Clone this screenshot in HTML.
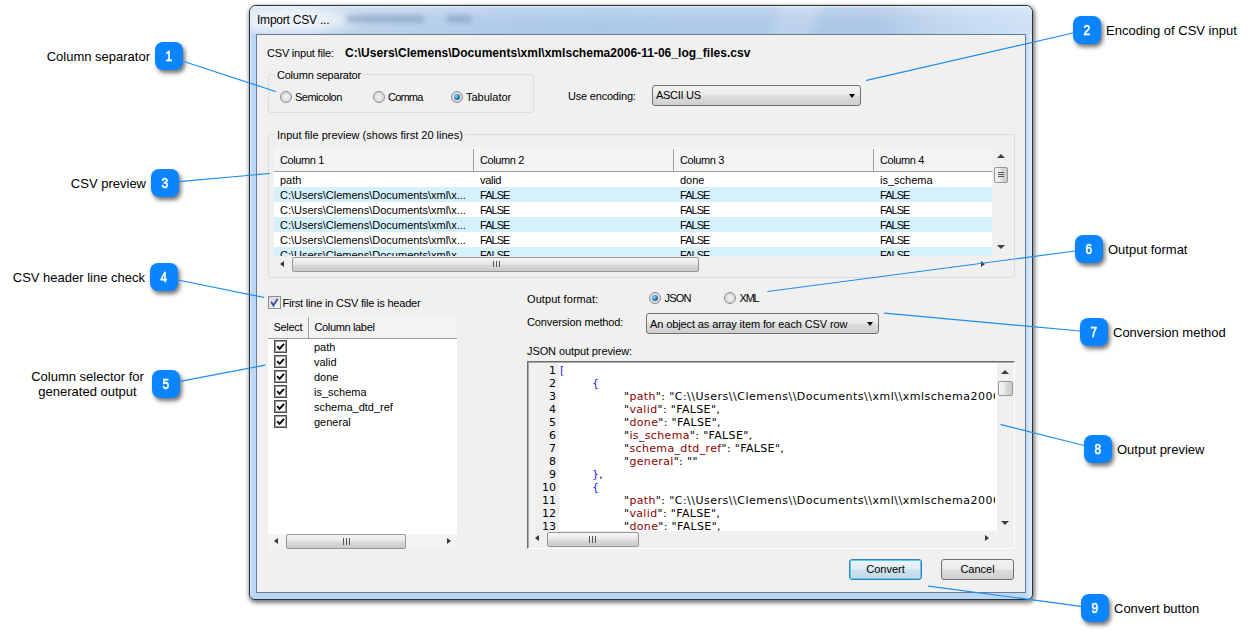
<!DOCTYPE html>
<html>
<head>
<meta charset="utf-8">
<title>Import CSV</title>
<style>
html,body{margin:0;padding:0;background:#fff;}
body{width:1253px;height:633px;position:relative;overflow:hidden;font-family:"Liberation Sans",sans-serif;font-size:11px;color:#000;}
.abs{position:absolute;}
.t{position:absolute;white-space:nowrap;line-height:14px;font-size:11px;}
/* annotation labels */
.lab{position:absolute;white-space:nowrap;font-size:13px;line-height:15px;color:#000;}
.badge{position:absolute;width:28px;height:28px;border-radius:8px;background:#0a84ff;color:#fff;font-size:14px;line-height:28px;text-align:center;box-shadow:2px 3px 4px rgba(0,0,0,.55);}
.badge span{display:inline-block;transform:scaleX(.85);-webkit-text-stroke:.6px #fff;}
/* window */
#win{left:249px;top:5px;width:784px;height:595px;border-radius:7px 7px 6px 6px;background:#b9d8f9;border:1px solid #2b2f36;box-sizing:border-box;box-shadow:1px 2px 4px 1px rgba(0,0,0,.52);overflow:hidden;}
#tbar{left:0;top:0;width:782px;height:28px;background:radial-gradient(ellipse 75px 16px at 46px 14px,rgba(255,255,255,.8) 0,rgba(255,255,255,.55) 50%,rgba(255,255,255,0) 100%),linear-gradient(to bottom,rgba(255,255,255,.75) 0,rgba(255,255,255,.25) 2px,rgba(255,255,255,.08) 12px,rgba(255,255,255,0) 100%),linear-gradient(112deg,rgba(255,255,255,0) 0,rgba(255,255,255,0) 66%,rgba(255,255,255,.18) 68%,rgba(255,255,255,.18) 71%,rgba(255,255,255,0) 73%,rgba(255,255,255,0) 100%),linear-gradient(to right,#cfdff1 0,#bcd2ea 14%,#aecaea 30%,#a8c7e8 45%,#acc9e9 60%,#a9c5e5 80%,#bdd4ee 87%,#c6dbf3 93%,#cde0f5 100%);}
.blob{position:absolute;background:#7f99ba;filter:blur(2.5px);opacity:.55;border-radius:3px;}
#client{left:256px;top:34px;width:770px;height:559px;background:#f0f0f0;border:1px solid #6d7a8a;box-sizing:border-box;}
.gb{position:absolute;border:1px solid #d5dfe5;border-radius:3px;box-sizing:border-box;}
.gbl{position:absolute;background:#f0f0f0;padding:0 2px;white-space:nowrap;line-height:14px;}
.radio{position:absolute;width:12px;height:12px;border-radius:50%;box-sizing:border-box;border:1px solid #8e8f8f;background:radial-gradient(circle at 50% 50%,#f4f4f4 0,#dcdcdc 60%,#c4c4c4 100%);}
.radio.on::after{content:"";position:absolute;left:2px;top:2px;width:6px;height:6px;border-radius:50%;background:radial-gradient(circle at 35% 35%,#8fd6f5 0,#1c6fb6 60%,#0c3e7a 100%);}
.combo{position:absolute;box-sizing:border-box;border:1px solid #707070;border-radius:3px;background:linear-gradient(to bottom,#f2f2f2 0,#ebebeb 48%,#dddddd 52%,#cfcfcf 100%);}
.combo .t{left:3px;}
.arrow{position:absolute;width:0;height:0;border-left:3.5px solid transparent;border-right:3.5px solid transparent;border-top:4px solid #000;}
.btn{position:absolute;box-sizing:border-box;border:1px solid #707070;border-radius:3px;background:linear-gradient(to bottom,#f2f2f2 0,#ebebeb 48%,#dddddd 52%,#cfcfcf 100%);text-align:center;line-height:19px;font-size:11px;}
.sb{position:absolute;background:#f0f0f0;}
.thumbh{position:absolute;box-sizing:border-box;border:1px solid #979797;border-radius:2px;background:linear-gradient(to bottom,#f5f5f5 0,#e9e9ea 42%,#d8d9db 58%,#c9cacc 100%);}
.thumbv{position:absolute;box-sizing:border-box;border:1px solid #979797;border-radius:2px;background:linear-gradient(to right,#f5f5f5 0,#e9e9ea 42%,#d8d9db 58%,#c9cacc 100%);}
.al{position:absolute;width:0;height:0;border-top:3.5px solid transparent;border-bottom:3.5px solid transparent;border-right:4px solid #383838;}
.ar{position:absolute;width:0;height:0;border-top:3.5px solid transparent;border-bottom:3.5px solid transparent;border-left:4px solid #383838;}
.au{position:absolute;width:0;height:0;border-left:4px solid transparent;border-right:4px solid transparent;border-bottom:4px solid #404040;}
.ad{position:absolute;width:0;height:0;border-left:4px solid transparent;border-right:4px solid transparent;border-top:4px solid #404040;}
.grip{position:absolute;font-size:8px;line-height:8px;color:#555;letter-spacing:0;}
.row{position:absolute;left:0;width:719px;height:15px;}
.row.b{background:#d6f0fc;}
.row span{position:absolute;top:1px;line-height:15px;white-space:nowrap;}
.cb{position:absolute;width:13px;height:13px;box-sizing:border-box;border:1px solid #4d4d4d;box-shadow:inset 0 0 0 1px #9a9a9a;background:#fff;}
.cb svg{position:absolute;left:-1px;top:-1px;}
.ed{font-family:"DejaVu Sans","Liberation Sans",sans-serif;font-size:11px;line-height:13px;white-space:pre;position:absolute;}
.edt{letter-spacing:.35px;white-space:nowrap;} .edt div{height:13px;} .l1{padding-left:32px;} .l2{padding-left:64px;}
.k{color:#8b0000;} .p{color:#1a1aff;}
</style>
</head>
<body>

<!-- connector lines -->
<svg class="abs" style="left:0;top:0;z-index:50;pointer-events:none" width="1253" height="633" viewBox="0 0 1253 633">
<g stroke="#1e8cf0" stroke-width="1.2" fill="none" stroke-linecap="round">
<line x1="183" y1="61.2" x2="275.6" y2="91.5"/>
<line x1="1073" y1="33" x2="866.5" y2="80.4"/>
<line x1="179" y1="181.7" x2="269.6" y2="173.5"/>
<line x1="178" y1="280" x2="263.6" y2="297.4"/>
<line x1="180" y1="381.3" x2="264.9" y2="365.2"/>
<line x1="1075" y1="251" x2="767.7" y2="291.5"/>
<line x1="1080" y1="331" x2="884.4" y2="313.2"/>
<line x1="1084" y1="445.5" x2="1001" y2="424.6"/>
<line x1="1081" y1="606.3" x2="928.6" y2="586.2"/>
</g>
</svg>

<!-- window frame -->
<div id="win" class="abs"><div id="tbar" class="abs"></div><div class="blob" style="left:96px;top:9px;width:78px;height:8px;"></div><div class="blob" style="left:196px;top:9px;width:26px;height:8px;"></div><div class="abs" style="left:0;top:28px;width:782px;height:565px;background:linear-gradient(to right,#dfeaf7 0,#b9d8f9 2px,#b9d8f9 775px,#c9e0f8 778px,#e2edf9 781px,#cfe2f7 782px);"></div></div>
<div class="t" style="left:257px;top:13px;font-size:12px;line-height:15px;letter-spacing:-.22px;">Import CSV ...</div>
<div id="client" class="abs"></div>

<!-- row 1 -->
<div class="t" style="left:267px;top:46px;letter-spacing:-.2px;">CSV input file:</div>
<div class="t" style="left:345px;top:46px;font-weight:bold;font-size:12px;letter-spacing:.03px;">C:\Users\Clemens\Documents\xml\xmlschema2006-11-06_log_files.csv</div>

<!-- group: column separator -->
<div class="gb" style="left:268px;top:74px;width:266px;height:39px;"></div>
<div class="gbl" style="left:275px;top:68px;letter-spacing:-.22px;">Column separator</div>
<div class="radio" style="left:280px;top:91px;"></div><div class="t" style="left:295px;top:90px;letter-spacing:-.5px;">Semicolon</div>
<div class="radio" style="left:373px;top:91px;"></div><div class="t" style="left:388px;top:90px;letter-spacing:-.8px;">Comma</div>
<div class="radio on" style="left:451px;top:91px;"></div><div class="t" style="left:466px;top:90px;">Tabulator</div>

<div class="t" style="left:568px;top:89px;letter-spacing:-.2px;">Use encoding:</div>
<div class="combo" style="left:652px;top:85px;width:209px;height:21px;"><div class="t" style="top:2px;letter-spacing:-.3px;">ASCII US</div><div class="arrow" style="left:196px;top:8px;"></div></div>

<!-- group: input preview -->
<div class="gb" style="left:268px;top:134px;width:747px;height:144px;"></div>
<div class="gbl" style="left:275px;top:128px;">Input file preview (shows first 20 lines)</div>
<div id="list1" class="abs" style="left:274px;top:148px;width:734px;height:125px;background:#fff;overflow:hidden;">
  <div class="abs" style="left:0;top:0;width:718px;height:24px;background:linear-gradient(to bottom,#f6f6f6 0,#f3f3f3 100%);border-bottom:1px solid #9e9e9e;box-sizing:border-box;"></div>
  <div class="abs" style="left:199px;top:1px;width:1px;height:22px;background:#a0a0a0;"></div>
  <div class="abs" style="left:399px;top:1px;width:1px;height:22px;background:#a0a0a0;"></div>
  <div class="abs" style="left:599px;top:1px;width:1px;height:22px;background:#a0a0a0;"></div>
  <div class="t" style="left:6px;top:5px;letter-spacing:-.4px;">Column 1</div>
  <div class="t" style="left:206px;top:5px;letter-spacing:-.4px;">Column 2</div>
  <div class="t" style="left:406px;top:5px;letter-spacing:-.4px;">Column 3</div>
  <div class="t" style="left:606px;top:5px;letter-spacing:-.4px;">Column 4</div>
  <div class="row" style="top:24px;"><span style="left:6px">path</span><span style="left:206px;letter-spacing:-.3px">valid</span><span style="left:406px">done</span><span style="left:606px">is_schema</span></div>
  <div class="row b" style="top:39px;"><span style="left:6px">C:\Users\Clemens\Documents\xml\x...</span><span style="left:206px;letter-spacing:-.95px">FALSE</span><span style="left:406px;letter-spacing:-.95px">FALSE</span><span style="left:606px;letter-spacing:-.95px">FALSE</span></div>
  <div class="row" style="top:54px;"><span style="left:6px">C:\Users\Clemens\Documents\xml\x...</span><span style="left:206px;letter-spacing:-.95px">FALSE</span><span style="left:406px;letter-spacing:-.95px">FALSE</span><span style="left:606px;letter-spacing:-.95px">FALSE</span></div>
  <div class="row b" style="top:69px;"><span style="left:6px">C:\Users\Clemens\Documents\xml\x...</span><span style="left:206px;letter-spacing:-.95px">FALSE</span><span style="left:406px;letter-spacing:-.95px">FALSE</span><span style="left:606px;letter-spacing:-.95px">FALSE</span></div>
  <div class="row" style="top:84px;"><span style="left:6px">C:\Users\Clemens\Documents\xml\x...</span><span style="left:206px;letter-spacing:-.95px">FALSE</span><span style="left:406px;letter-spacing:-.95px">FALSE</span><span style="left:606px;letter-spacing:-.95px">FALSE</span></div>
  <div class="row b" style="top:99px;"><span style="left:6px">C:\Users\Clemens\Documents\xml\x...</span><span style="left:206px;letter-spacing:-.95px">FALSE</span><span style="left:406px;letter-spacing:-.95px">FALSE</span><span style="left:606px;letter-spacing:-.95px">FALSE</span></div>
  <!-- vscroll -->
  <div class="sb" style="left:718px;top:0;width:16px;height:108px;"></div>
  <div class="au" style="left:723px;top:6px;"></div>
  <div class="thumbv" style="left:720px;top:19px;width:14px;height:16px;"></div>
  <div class="abs" style="left:724px;top:24px;width:6px;height:1px;background:#555;box-shadow:0 2px 0 #555,0 4px 0 #555;"></div>
  <div class="ad" style="left:723px;top:97px;"></div>
  <!-- hscroll -->
  <div class="sb" style="left:0;top:108px;width:734px;height:17px;"></div>
  <div class="al" style="left:6px;top:113px;"></div>
  <div class="thumbh" style="left:18px;top:109px;width:407px;height:14.5px;"></div>
  <div class="abs" style="left:219px;top:113px;width:1px;height:6px;background:#555;box-shadow:3px 0 0 #555,6px 0 0 #555;"></div>
  <div class="ar" style="left:707px;top:113px;"></div>
</div>

<!-- checkbox header -->
<div class="abs" style="left:268px;top:296px;width:13px;height:13px;box-sizing:border-box;border:1px solid #8e8f8f;background:linear-gradient(135deg,#d8d8d8 0,#f6f6f6 100%);"><svg width="11" height="11" viewBox="0 0 11 11" style="position:absolute;left:0;top:0"><path d="M2.2 4.6 L4.4 8.4 L8.6 1.8" stroke="#3a4aa8" stroke-width="1.8" fill="none"/></svg></div>
<div class="t" style="left:282.6px;top:296px;letter-spacing:-.2px;">First line in CSV file is header</div>

<!-- column list -->
<div id="list2" class="abs" style="left:268px;top:316px;width:189px;height:233px;background:#fff;overflow:hidden;">
  <div class="abs" style="left:0;top:0;width:189px;height:23px;background:#f3f3f3;border-bottom:1px solid #9e9e9e;box-sizing:border-box;"></div>
  <div class="abs" style="left:40px;top:1px;width:1px;height:21px;background:#a0a0a0;"></div>
  <div class="t" style="left:5.5px;top:4px;letter-spacing:-.3px;">Select</div>
  <div class="t" style="left:46.5px;top:4px;letter-spacing:-.35px;">Column label</div>
  <div class="cb" style="left:6px;top:24px;"><svg width="13" height="13" viewBox="0 0 13 13"><path d="M3.2 6.2 L5.6 8.8 L10 3.8" stroke="#000" stroke-width="1.9" fill="none"/></svg></div><div class="t" style="left:46px;top:24px;">path</div>
  <div class="cb" style="left:6px;top:39px;"><svg width="13" height="13" viewBox="0 0 13 13"><path d="M3.2 6.2 L5.6 8.8 L10 3.8" stroke="#000" stroke-width="1.9" fill="none"/></svg></div><div class="t" style="left:46px;top:39px;">valid</div>
  <div class="cb" style="left:6px;top:54px;"><svg width="13" height="13" viewBox="0 0 13 13"><path d="M3.2 6.2 L5.6 8.8 L10 3.8" stroke="#000" stroke-width="1.9" fill="none"/></svg></div><div class="t" style="left:46px;top:54px;">done</div>
  <div class="cb" style="left:6px;top:69px;"><svg width="13" height="13" viewBox="0 0 13 13"><path d="M3.2 6.2 L5.6 8.8 L10 3.8" stroke="#000" stroke-width="1.9" fill="none"/></svg></div><div class="t" style="left:46px;top:69px;">is_schema</div>
  <div class="cb" style="left:6px;top:84px;"><svg width="13" height="13" viewBox="0 0 13 13"><path d="M3.2 6.2 L5.6 8.8 L10 3.8" stroke="#000" stroke-width="1.9" fill="none"/></svg></div><div class="t" style="left:46px;top:84px;">schema_dtd_ref</div>
  <div class="cb" style="left:6px;top:99px;"><svg width="13" height="13" viewBox="0 0 13 13"><path d="M3.2 6.2 L5.6 8.8 L10 3.8" stroke="#000" stroke-width="1.9" fill="none"/></svg></div><div class="t" style="left:46px;top:99px;">general</div>
  <div class="sb" style="left:0;top:218px;width:189px;height:15px;background:#f3f3f3;"></div>
  <div class="al" style="left:6px;top:222px;"></div>
  <div class="thumbh" style="left:18px;top:218px;width:119.5px;height:14.5px;"></div>
  <div class="abs" style="left:74.5px;top:222px;width:1px;height:7px;background:#555;box-shadow:3px 0 0 #555,6px 0 0 #555;"></div>
  <div class="ar" style="left:179px;top:222px;"></div>
</div>

<!-- right side -->
<div class="t" style="left:527px;top:292px;letter-spacing:.07px;">Output format:</div>
<div class="radio on" style="left:649px;top:292px;"></div><div class="t" style="left:664.5px;top:291px;letter-spacing:-.8px;">JSON</div>
<div class="radio" style="left:724px;top:292px;"></div><div class="t" style="left:739.5px;top:291px;letter-spacing:-1.2px;">XML</div>
<div class="t" style="left:527px;top:315px;letter-spacing:-.12px;">Conversion method:</div>
<div class="combo" style="left:646px;top:313px;width:233px;height:21px;"><div class="t" style="top:3px;letter-spacing:-.11px;">An object as array item for each CSV row</div><div class="arrow" style="left:220px;top:8px;"></div></div>
<div class="t" style="left:527px;top:344px;letter-spacing:-.1px;">JSON output preview:</div>

<!-- editor -->
<div id="ed" class="abs" style="left:527px;top:361px;width:488px;height:188px;background:#fff;border-left:1px solid #6e6e6e;border-top:1px solid #6e6e6e;border-right:1px solid #fff;border-bottom:1px solid #fff;box-sizing:border-box;overflow:hidden;">
  <div class="abs" style="left:0;top:0;width:31px;height:169px;background:#f0f0f0;"></div>
  <div class="ed" style="left:0;top:2px;width:28px;text-align:right;">1
2
3
4
5
6
7
8
9
10
11
12
13</div>
  <div class="ed edt" style="left:32px;top:2px;width:435px;overflow:hidden;"><div><span class="p">[</span></div><div class="l1"><span class="p">{</span></div><div class="l2">"<span class="k">path</span>": <span style="letter-spacing:.5px">"C:\\Users\\Clemens\\Documents\\xml\\xmlschema2006-11-06_log_files.csv",</span></div><div class="l2">"<span class="k">valid</span>": "FALSE",</div><div class="l2">"<span class="k">done</span>": "FALSE",</div><div class="l2">"<span class="k">is_schema</span>": "FALSE",</div><div class="l2">"<span class="k">schema_dtd_ref</span>": "FALSE",</div><div class="l2">"<span class="k">general</span>": ""</div><div class="l1"><span class="p">}</span>,</div><div class="l1"><span class="p">{</span></div><div class="l2">"<span class="k">path</span>": <span style="letter-spacing:.5px">"C:\\Users\\Clemens\\Documents\\xml\\xmlschema2006-11-06_log_files.csv",</span></div><div class="l2">"<span class="k">valid</span>": "FALSE",</div><div class="l2">"<span class="k">done</span>": "FALSE",</div></div>
  <div class="abs" style="left:0;top:0;width:486px;height:1px;background:#a9a9a9;"></div>
  <div class="abs" style="left:0;top:0;width:1px;height:186px;background:#a9a9a9;"></div>
  <!-- vscroll -->
  <div class="sb" style="left:469px;top:1px;width:17px;height:168px;"></div>
  <div class="au" style="left:473px;top:8px;"></div>
  <div class="thumbv" style="left:470px;top:19px;width:15px;height:15px;"></div>
  <div class="ad" style="left:473px;top:159px;"></div>
  <!-- hscroll -->
  <div class="sb" style="left:1px;top:169px;width:485px;height:17px;"></div>
  <div class="al" style="left:7px;top:173px;"></div>
  <div class="thumbh" style="left:19px;top:170px;width:92px;height:15px;"></div>
  <div class="abs" style="left:61px;top:174px;width:1px;height:7px;background:#555;box-shadow:3px 0 0 #555,6px 0 0 #555;"></div>
  <div class="ar" style="left:457px;top:173px;"></div>
</div>

<!-- buttons -->
<div class="btn" style="left:849px;top:559px;width:73px;height:21px;border-color:#3c7fb1;box-shadow:inset 0 0 0 1px #54cdf5;background:linear-gradient(to bottom,#eef5f9 0,#dfecf4 48%,#cde0ec 52%,#c4dcea 100%);">Convert</div>
<div class="btn" style="left:941px;top:559px;width:73px;height:21px;">Cancel</div>

<!-- annotation badges and labels -->
<div class="lab r" style="right:1103px;top:49px;">Column separator</div><div class="badge" style="left:155px;top:42px;"><span>1</span></div>
<div class="badge" style="left:1073px;top:16px;"><span>2</span></div><div class="lab" style="left:1106px;top:23px;">Encoding of CSV input</div>
<div class="lab r" style="right:1107px;top:176px;">CSV preview</div><div class="badge" style="left:151px;top:169px;"><span>3</span></div>
<div class="lab r" style="right:1108px;top:270px;">CSV header line check</div><div class="badge" style="left:150px;top:263px;"><span>4</span></div>
<div class="lab" style="left:31px;top:369px;width:113px;text-align:center;white-space:normal;">Column selector for generated output</div><div class="badge" style="left:152px;top:370px;"><span>5</span></div>
<div class="badge" style="left:1075px;top:235px;"><span>6</span></div><div class="lab" style="left:1108px;top:242px;">Output format</div>
<div class="badge" style="left:1080px;top:318px;"><span>7</span></div><div class="lab" style="left:1113px;top:325px;">Conversion method</div>
<div class="badge" style="left:1084px;top:435px;"><span>8</span></div><div class="lab" style="left:1117px;top:442px;">Output preview</div>
<div class="badge" style="left:1081px;top:594px;"><span>9</span></div><div class="lab" style="left:1114px;top:601px;">Convert button</div>

</body>
</html>
